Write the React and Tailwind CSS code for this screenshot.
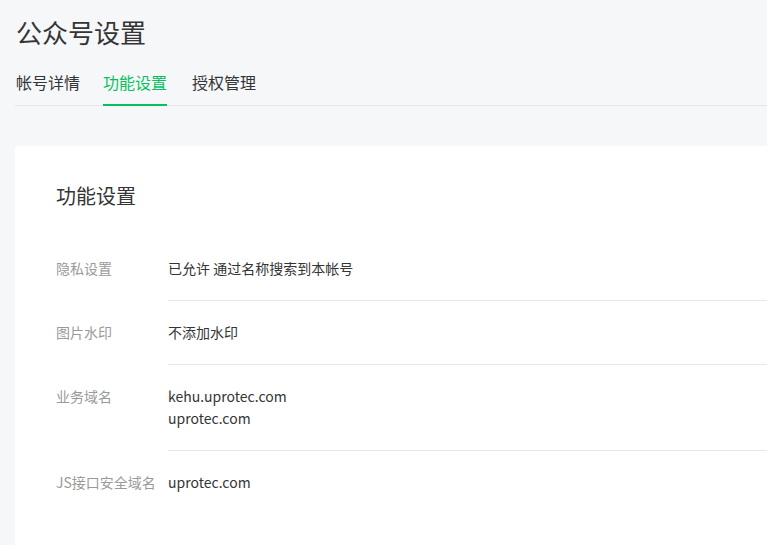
import React from "react";

const rows = [
  { label: "隐私设置", values: ["已允许 通过名称搜索到本帐号"] },
  { label: "图片水印", values: ["不添加水印"] },
  { label: "业务域名", values: ["kehu.uprotec.com", "uprotec.com"] },
  { label: "JS接口安全域名", values: ["uprotec.com"], last: true },
];

export default function App() {
  return (
    <div
      className="h-[545px] w-[767px] overflow-hidden bg-[#f6f7f9] text-[#353535]"
      style={{ fontFamily: '"Noto Sans CJK SC", "Noto Sans", sans-serif' }}
    >
      <div className="pl-[16px] pt-[14px]">
        <h1 className="text-[26px] leading-[36px] font-normal">公众号设置</h1>
      </div>
      <div className="ml-[15px] mt-[20px] flex border-b border-[#e4e6e9] pl-[1px]">
        <div className="text-[16px] leading-[24px] pb-[11px] mr-[23px]">帐号详情</div>
        <div className="text-[16px] leading-[24px] pb-[9px] mr-[25px] text-[#07c160] border-b-2 border-[#07c160] -mb-px">
          功能设置
        </div>
        <div className="text-[16px] leading-[24px] pb-[11px]">授权管理</div>
      </div>
      <div className="ml-[15px] mt-[40px] rounded-t-[2px] bg-white pl-[41px] pt-[36px] pb-[40px]">
        <h2 className="text-[20px] leading-[28px] font-normal">功能设置</h2>
        <div className="mt-[27px]">
          {rows.map((r) => (
            <div key={r.label} className="flex text-[14px] leading-[22px]">
              <div className="w-[112px] shrink-0 pt-[20px] text-[#9a9a9a]">{r.label}</div>
              <div
                className={
                  "flex-1 pt-[20px] pb-[21px] " +
                  (r.last ? "" : "border-b border-[#e7e7eb]")
                }
              >
                {r.values.map((v) => (
                  <div key={v}>{v}</div>
                ))}
              </div>
            </div>
          ))}
        </div>
      </div>
    </div>
  );
}
